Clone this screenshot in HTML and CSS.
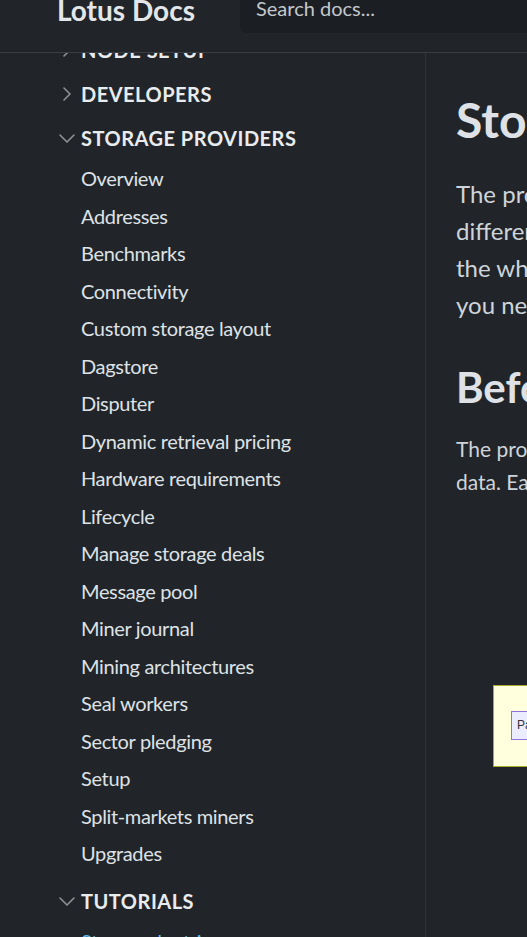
FILE: index.html
```html
<!DOCTYPE html>
<html lang="en">
<head>
<meta charset="utf-8">
<title>Storage providers – Lotus Docs</title>
<link rel="stylesheet" href="styles.css">
</head>
<body>
<div class="page">
  <header class="topbar">
    <div class="brand">Lotus Docs</div>
    <div class="search"><span class="search-text">Search docs...</span></div>
  </header>
  <div class="layout">
    <aside class="sidebar">
      <nav class="nav">
        <div class="section">
          <div class="section-head">
            <span class="chev"><svg viewBox="0 0 16 16" width="16" height="16"><path d="M5 2 L11 8 L5 14" /></svg></span>
            <span class="section-label">Node setup</span>
          </div>
        </div>
        <div class="section">
          <div class="section-head">
            <span class="chev"><svg viewBox="0 0 16 16" width="16" height="16"><path d="M5 2 L11 8 L5 14" /></svg></span>
            <span class="section-label">Developers</span>
          </div>
        </div>
        <div class="section open">
          <div class="section-head">
            <span class="chev"><svg viewBox="0 0 16 16" width="16" height="16"><path d="M1 5 L8 12 L15 5" /></svg></span>
            <span class="section-label">Storage providers</span>
          </div>
          <ul class="items">
            <li>Overview</li>
            <li>Addresses</li>
            <li>Benchmarks</li>
            <li>Connectivity</li>
            <li>Custom storage layout</li>
            <li>Dagstore</li>
            <li>Disputer</li>
            <li>Dynamic retrieval pricing</li>
            <li>Hardware requirements</li>
            <li>Lifecycle</li>
            <li>Manage storage deals</li>
            <li>Message pool</li>
            <li>Miner journal</li>
            <li>Mining architectures</li>
            <li>Seal workers</li>
            <li>Sector pledging</li>
            <li>Setup</li>
            <li>Split-markets miners</li>
            <li>Upgrades</li>
          </ul>
        </div>
        <div class="section open">
          <div class="section-head">
            <span class="chev"><svg viewBox="0 0 16 16" width="16" height="16"><path d="M1 5 L8 12 L15 5" /></svg></span>
            <span class="section-label">Tutorials</span>
          </div>
          <ul class="items">
            <li class="active">Store and retrieve</li>
          </ul>
        </div>
      </nav>
    </aside>
    <main class="content">
      <h1 class="title">Storage providers</h1>
      <p class="lead">The provider is the party that offers storage and retrieval to clients on the<br>different markets of the Filecoin network. This section walks through<br>the whole lifecycle of running a storage provider with Lotus, and everything<br>you need to know to set it up and keep it running.</p>
      <h2 class="subtitle">Before you begin</h2>
      <p class="text">The provider must have enough disk space to store and seal the client<br>data. Each sector is sealed before it can be committed to the chain.</p>
      <figure class="diagram">
        <div class="cluster">
          <div class="node">Payload CID</div>
        </div>
      </figure>
    </main>
  </div>
</div>
</body>
</html>
```

FILE: styles.css
```css
html, body {
  margin: 0;
  padding: 0;
  background: #212529;
  overflow: hidden;
}

body {
  font-family: "Lato", "Noto Sans", sans-serif;
  color: #dee2e6;
}

.page {
  width: 1280px;
}

.topbar {
  display: flex;
  align-items: flex-start;
  height: 52px;
  padding-left: 57px;
  border-bottom: 1px solid #3a3e43;
  overflow: hidden;
  box-sizing: content-box;
}

.brand {
  flex: 0 0 183px;
  margin-top: -4px;
  font-size: 28px;
  line-height: 28px;
  font-weight: 700;
  color: #e4e7ea;
}

.search {
  flex: 0 0 700px;
  height: 43px;
  margin-top: -10px;
  background: #1b1e22;
  border-radius: 6px;
  box-sizing: border-box;
  padding: 6px 16px 0;
}

.search-text {
  font-size: 20px;
  line-height: 24px;
  color: #c4c8cc;
}

.layout {
  display: flex;
  height: calc(100vh - 53px);
}

.sidebar {
  flex: 0 0 426px;
  box-sizing: border-box;
  border-right: 1px solid #30343a;
  overflow: hidden;
}

.nav {
  margin-top: -25px;
  padding-left: 57px;
}

.section-head {
  display: flex;
  align-items: center;
  height: 44px;
}

.chev {
  flex: 0 0 20px;
  margin-right: 4px;
  display: flex;
  align-items: center;
  justify-content: center;
}

.chev svg {
  fill: none;
  stroke: #8e9297;
  stroke-width: 1.6;
  stroke-linecap: round;
  stroke-linejoin: round;
}

.section-label {
  font-size: 20px;
  line-height: 44px;
  font-weight: 700;
  text-transform: uppercase;
  letter-spacing: 0.5px;
  color: #e9ecef;
}

.items {
  list-style: none;
  margin: 0;
  padding: 0 0 6.5px 24px;
}

.items li {
  font-size: 20px;
  line-height: 37.5px;
  letter-spacing: -0.35px;
  color: #dee2e6;
  white-space: nowrap;
}

.items li.active {
  color: #62b4e4;
}

.content {
  flex: 0 0 760px;
  padding: 38px 30px 0;
}

.title {
  margin: 0;
  font-size: 48px;
  line-height: 1.2;
  font-weight: 700;
  color: #dee2e6;
  white-space: nowrap;
}

.lead {
  margin: 26px 0 0;
  font-size: 24px;
  line-height: 37px;
  color: #ced4da;
  white-space: nowrap;
}

.subtitle {
  margin: 39px 0 0;
  font-size: 42px;
  line-height: 1.2;
  font-weight: 700;
  color: #dee2e6;
  white-space: nowrap;
}

.text {
  margin: 20px 0 0;
  font-size: 21px;
  line-height: 33px;
  color: #ced4da;
  white-space: nowrap;
}

.diagram {
  margin: 187px 0 0 37px;
}

.cluster {
  width: 300px;
  height: 55px;
  background: #ffffde;
  border: 1px solid #aaaa33;
  padding: 25px 0 0 17px;
  box-sizing: content-box;
}

.node {
  display: inline-block;
  height: 27px;
  line-height: 27px;
  padding: 0 5px;
  background: #ececff;
  border: 1px solid #9370db;
  font-family: "Liberation Sans", Arial, sans-serif;
  font-size: 12px;
  color: #333333;
}
```
